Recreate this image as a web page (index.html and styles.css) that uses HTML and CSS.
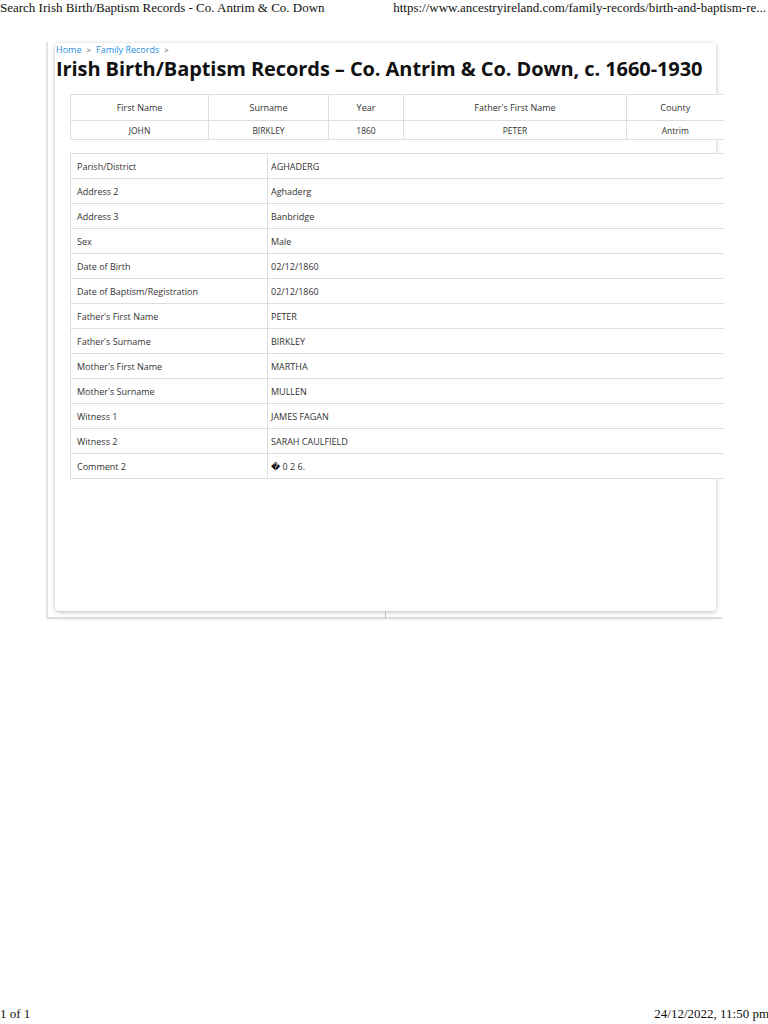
FILE: index.html
```html
<!DOCTYPE html>
<html lang="en">
<head>
<meta charset="utf-8">
<title>Search Irish Birth/Baptism Records - Co. Antrim &amp; Co. Down</title>
<link rel="stylesheet" href="styles.css">
</head>
<body>
<div class="sheet">
  <header class="print-head">
    <span class="print-title">Search Irish Birth/Baptism Records - Co. Antrim &amp; Co. Down</span>
    <span class="print-url">https://www.ancestryireland.com/family-records/birth-and-baptism-re...</span>
  </header>

  <div class="wrap">
    <main class="card">
      <nav class="crumbs"><a href="#">Home</a><span class="sep">&gt;</span><a href="#">Family Records</a><span class="sep">&gt;</span></nav>
      <h1 class="title">Irish Birth/Baptism Records – Co. Antrim &amp; Co. Down, c. 1660-1930</h1>

      <table class="summary">
        <colgroup>
          <col class="c1"><col class="c2"><col class="c3"><col class="c4"><col class="c5">
        </colgroup>
        <thead>
          <tr><th>First Name</th><th>Surname</th><th>Year</th><th>Father's First Name</th><th>County</th></tr>
        </thead>
        <tbody>
          <tr><td>JOHN</td><td>BIRKLEY</td><td>1860</td><td>PETER</td><td>Antrim</td></tr>
        </tbody>
      </table>

      <table class="detail">
        <colgroup><col class="d1"><col class="d2"></colgroup>
        <tbody>
          <tr><td>Parish/District</td><td>AGHADERG</td></tr>
          <tr><td>Address 2</td><td>Aghaderg</td></tr>
          <tr><td>Address 3</td><td>Banbridge</td></tr>
          <tr><td>Sex</td><td>Male</td></tr>
          <tr><td>Date of Birth</td><td>02/12/1860</td></tr>
          <tr><td>Date of Baptism/Registration</td><td>02/12/1860</td></tr>
          <tr><td>Father's First Name</td><td>PETER</td></tr>
          <tr><td>Father's Surname</td><td>BIRKLEY</td></tr>
          <tr><td>Mother's First Name</td><td>MARTHA</td></tr>
          <tr><td>Mother's Surname</td><td>MULLEN</td></tr>
          <tr><td>Witness 1</td><td>JAMES FAGAN</td></tr>
          <tr><td>Witness 2</td><td>SARAH CAULFIELD</td></tr>
          <tr><td>Comment 2</td><td><span class="bad">&#xFFFD;</span> 0 2 6.</td></tr>
        </tbody>
      </table>
    </main>
    <div class="tick"></div>
  </div>

  <div class="spacer"></div>

  <footer class="print-foot">
    <span>1 of 1</span>
    <span class="print-date">24/12/2022, 11:50 pm</span>
  </footer>
</div>
</body>
</html>
```

FILE: styles.css
```css
* { box-sizing: border-box; }

html, body {
  margin: 0;
  padding: 0;
  background: #fff;
}

.sheet {
  width: 768px;
  height: 1024px;
  display: flex;
  flex-direction: column;
  overflow: hidden;
}

.print-head,
.print-foot {
  display: flex;
  justify-content: space-between;
  font-family: "Liberation Serif", "Times New Roman", serif;
  font-size: 13px;
  line-height: 13px;
  color: #111;
  white-space: nowrap;
}

.print-head {
  height: 15px;
  line-height: 15px;
  margin: 0 0 -3px 0;
}

.print-url {
  margin-right: 2px;
}

.print-foot {
  height: 14px;
  margin-bottom: 3px;
}

.print-date {
  margin-right: -1px;
}

.spacer { flex: 1; }

.wrap {
  position: relative;
  margin: 30px 0 0 46px;
  width: 676px;
  padding: 0 6px 6px 7px;
  border-left: 2px solid #e4e4e4;
  border-bottom: 2px solid #dcdcdc;
  box-shadow: 0 3px 3px -2px rgba(0,0,0,0.06);
}

.tick {
  position: absolute;
  left: 337px;
  bottom: -2px;
  width: 1px;
  height: 8px;
  background: #bdbdbd;
}

.card {
  width: 661px;
  height: 568px;
  margin-top: 1px;
  padding: 1px 15px 0 1px;
  background: #fff;
  border-radius: 4px;
  box-shadow: 0 1px 4px rgba(0,0,0,0.28);
  font-family: "Open Sans", "Liberation Sans", sans-serif;
  color: #333;
}

.crumbs {
  font-size: 9px;
  line-height: 12px;
  color: #888;
}

.crumbs a {
  color: #2a8fe0;
  text-decoration: none;
}

.crumbs .sep {
  color: #555;
  margin: 0 5px;
  font-size: 8px;
}

.title {
  margin: 0 0 12px 0;
  font-size: 20px;
  line-height: 26px;
  font-weight: 700;
  color: #111;
  letter-spacing: -0.08px;
  white-space: nowrap;
}

table {
  position: relative;
  z-index: 1;
  margin-left: 14px;
  width: 653px;
  border-collapse: collapse;
  table-layout: fixed;
  background: #fff;
}

td, th {
  border: 1px solid #dedede;
  padding: 0 6px;
  white-space: nowrap;
  overflow: hidden;
}

td:last-child, th:last-child { border-right: none; }

.summary col.c1 { width: 138px; }
.summary col.c2 { width: 120px; }
.summary col.c3 { width: 75px; }
.summary col.c4 { width: 223px; }
.summary col.c5 { width: 97px; }

.summary th {
  height: 26px;
  font-size: 9px;
  font-weight: 400;
  color: #333;
  text-align: center;
}

.summary td {
  height: 19px;
  font-size: 8.5px;
  color: #333;
  text-align: center;
}

.detail {
  margin-top: 13px;
}

.detail col.d1 { width: 197px; }
.detail col.d2 { width: 456px; }

.detail td {
  height: 25px;
  font-size: 9px;
  color: #333;
  padding: 0 6px;
}

.detail td:last-child { padding-left: 3px; }

.bad {
  font-family: "DejaVu Sans", sans-serif;
  font-size: 9px;
  color: #111;
}
```
